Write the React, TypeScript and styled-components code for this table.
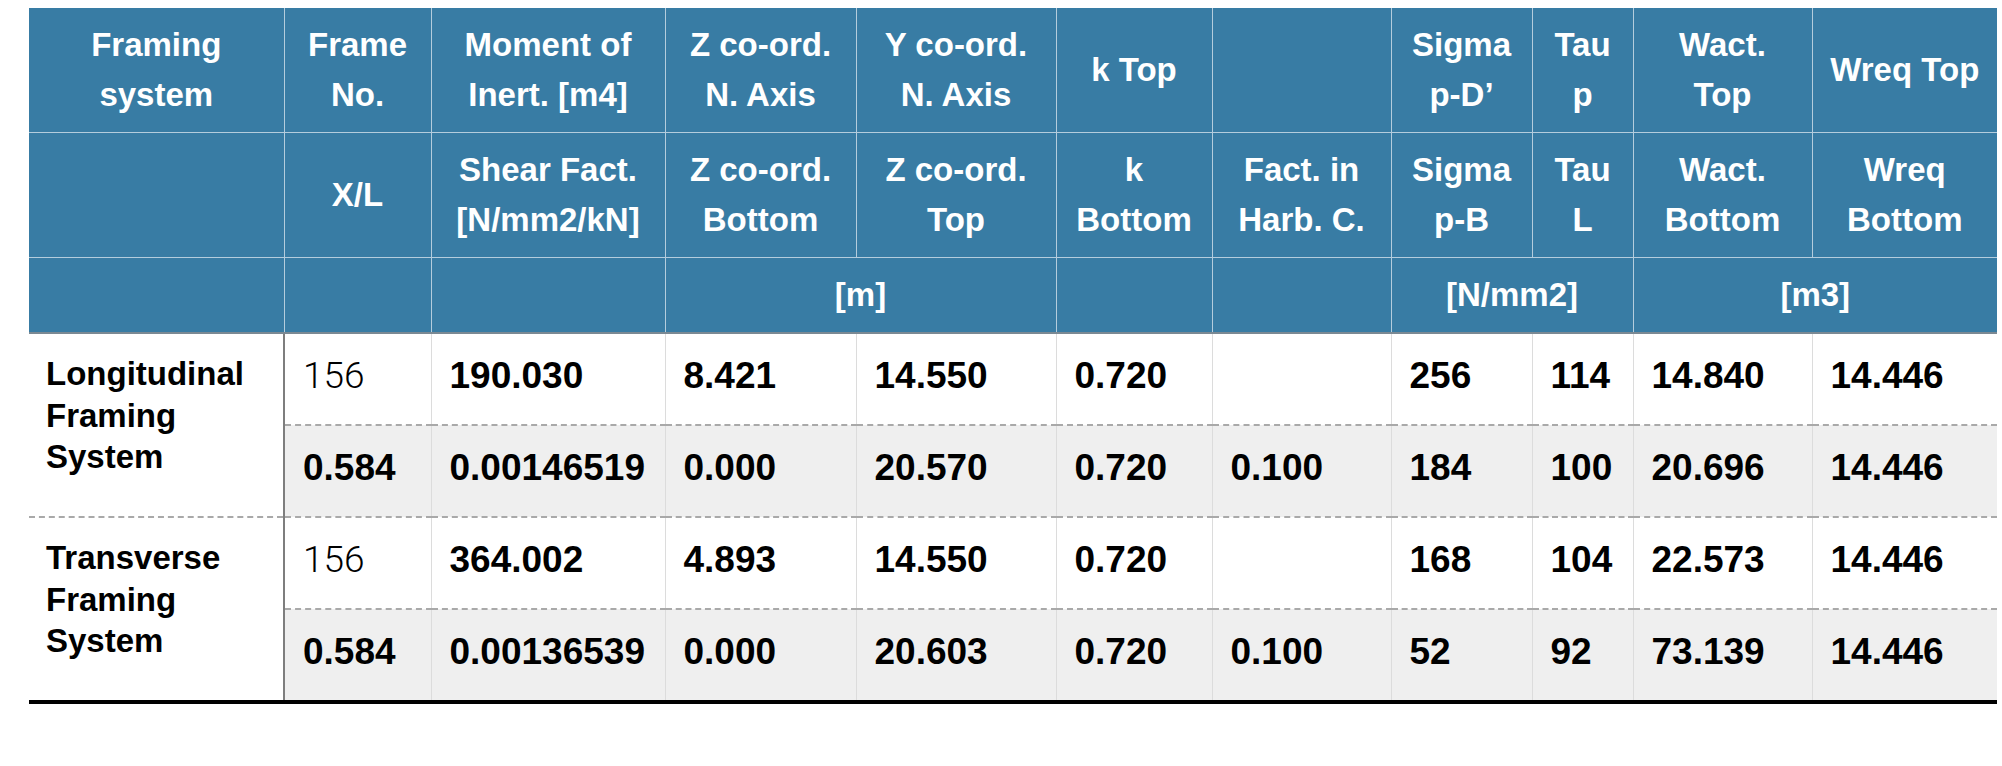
import styled, { createGlobalStyle } from "styled-components";
import { Fragment, ReactNode } from "react";

const GlobalStyle = createGlobalStyle`
  html, body {
    margin: 0;
    background: #fff;
  }
`;

const colWidths = [255, 147, 234, 191, 200, 156, 179, 141, 101, 179, 185];

type Head = { text: ReactNode; span?: number };

const headRows: { height: number; cells: Head[] }[] = [
  {
    height: 124,
    cells: [
      { text: <>Framing<br />system</> },
      { text: <>Frame<br />No.</> },
      { text: <>Moment of<br />Inert. [m4]</> },
      { text: <>Z co-ord.<br />N. Axis</> },
      { text: <>Y co-ord.<br />N. Axis</> },
      { text: "k Top" },
      { text: "" },
      { text: <>Sigma<br />p-D’</> },
      { text: <>Tau<br />p</> },
      { text: <>Wact.<br />Top</> },
      { text: "Wreq Top" },
    ],
  },
  {
    height: 125,
    cells: [
      { text: "" },
      { text: "X/L" },
      { text: <>Shear Fact.<br />[N/mm2/kN]</> },
      { text: <>Z co-ord.<br />Bottom</> },
      { text: <>Z co-ord.<br />Top</> },
      { text: <>k<br />Bottom</> },
      { text: <>Fact. in<br />Harb. C.</> },
      { text: <>Sigma<br />p-B</> },
      { text: <>Tau<br />L</> },
      { text: <>Wact.<br />Bottom</> },
      { text: <>Wreq<br />Bottom</> },
    ],
  },
  {
    height: 76,
    cells: [
      { text: "" },
      { text: "" },
      { text: "" },
      { text: "[m]", span: 2 },
      { text: "" },
      { text: "" },
      { text: "[N/mm2]", span: 2 },
      { text: "[m3]", span: 2 },
    ],
  },
];

const groups = [
  {
    label: <>Longitudinal<br />Framing<br />System</>,
    rows: [
      ["156", "190.030", "8.421", "14.550", "0.720", "", "256", "114", "14.840", "14.446"],
      ["0.584", "0.00146519", "0.000", "20.570", "0.720", "0.100", "184", "100", "20.696", "14.446"],
    ],
  },
  {
    label: <>Transverse<br />Framing<br />System</>,
    rows: [
      ["156", "364.002", "4.893", "14.550", "0.720", "", "168", "104", "22.573", "14.446"],
      ["0.584", "0.00136539", "0.000", "20.603", "0.720", "0.100", "52", "92", "73.139", "14.446"],
    ],
  },
];

export default function App() {
  return (
    <Page>
      <GlobalStyle />
      <Table>
        <colgroup>
          {colWidths.map((w, i) => (
            <Col key={i} $w={w} />
          ))}
        </colgroup>
        <thead>
          {headRows.map((row, r) => (
            <HeadRow key={r} $h={row.height}>
              {row.cells.map((c, i) => (
                <HeadCell key={i} colSpan={c.span} $top={r === 0} $bottom={r === headRows.length - 1}>
                  {c.text}
                </HeadCell>
              ))}
            </HeadRow>
          ))}
        </thead>
        <tbody>
          {groups.map((g, gi) => (
            <Fragment key={gi}>
              {g.rows.map((row, ri) => {
                const groupStart = ri === 0 && gi > 0;
                const last = gi === groups.length - 1 && ri === g.rows.length - 1;
                return (
                  <tr key={ri}>
                    {ri === 0 && (
                      <Label rowSpan={g.rows.length} $dashTop={groupStart} $last={gi === groups.length - 1}>
                        {g.label}
                      </Label>
                    )}
                    {row.map((v, ci) => (
                      <Value
                        key={ci}
                        $shade={ri % 2 === 1}
                        $light={ci === 0 && ri === 0}
                        $dashTop={ri > 0 || groupStart}
                        $last={last}
                      >
                        {v}
                      </Value>
                    ))}
                  </tr>
                );
              })}
            </Fragment>
          ))}
        </tbody>
      </Table>
    </Page>
  );
}

const Page = styled.div`
  padding: 8px 0 0 29px;
`;

const Table = styled.table`
  border-collapse: collapse;
  table-layout: fixed;
  width: 1968px;
  font-family: "Liberation Sans", Arial, Helvetica, sans-serif;
`;

const Col = styled.col<{ $w: number }>`
  width: ${(p) => p.$w}px;
`;

const HeadRow = styled.tr<{ $h: number }>`
  height: ${(p) => p.$h}px;
`;

const HeadCell = styled.th<{ $top?: boolean; $bottom?: boolean }>`
  background: #387ca4;
  color: #fff;
  font-size: 33px;
  font-weight: 700;
  line-height: 50px;
  text-align: center;
  vertical-align: middle;
  padding: 0 4px;
  border-left: 1px solid #b4cddd;
  border-right: 1px solid #b4cddd;
  border-top: ${(p) => (p.$top ? "none" : "1px solid #b4cddd")};
  border-bottom: ${(p) => (p.$bottom ? "2px solid #7b8993" : "1px solid #b4cddd")};
  white-space: nowrap;
  &:first-child {
    border-left: none;
  }
  &:last-child {
    border-right: none;
  }
`;

const Label = styled.td<{ $dashTop?: boolean; $last?: boolean }>`
  background: #fff;
  color: #000;
  font-size: 33px;
  font-weight: 700;
  line-height: 41.5px;
  text-align: left;
  vertical-align: top;
  padding: 19px 8px 0 17px;
  border-right: 2px solid #7e7e7e;
  border-top: ${(p) => (p.$dashTop ? "2px dashed #a9a9a9" : "none")};
  border-bottom: ${(p) => (p.$last ? "4px solid #000" : "none")};
`;

const Value = styled.td<{ $shade?: boolean; $light?: boolean; $dashTop?: boolean; $last?: boolean }>`
  background: ${(p) => (p.$shade ? "#efefef" : "#fff")};
  color: #000;
  font-family: ${(p) => (p.$light ? `Roboto, "Liberation Sans", sans-serif` : `"Liberation Sans", Arial, sans-serif`)};
  font-size: 37px;
  font-weight: ${(p) => (p.$light ? 300 : 700)};
  line-height: 44px;
  text-align: left;
  vertical-align: top;
  white-space: nowrap;
  padding: 20px 4px 26px 18px;
  border-right: 1px solid #dcdcdc;
  border-top: ${(p) => (p.$dashTop ? "2px dashed #a9a9a9" : "none")};
  border-bottom: ${(p) => (p.$last ? "4px solid #000" : "none")};
  &:last-child {
    border-right: none;
  }
`;
